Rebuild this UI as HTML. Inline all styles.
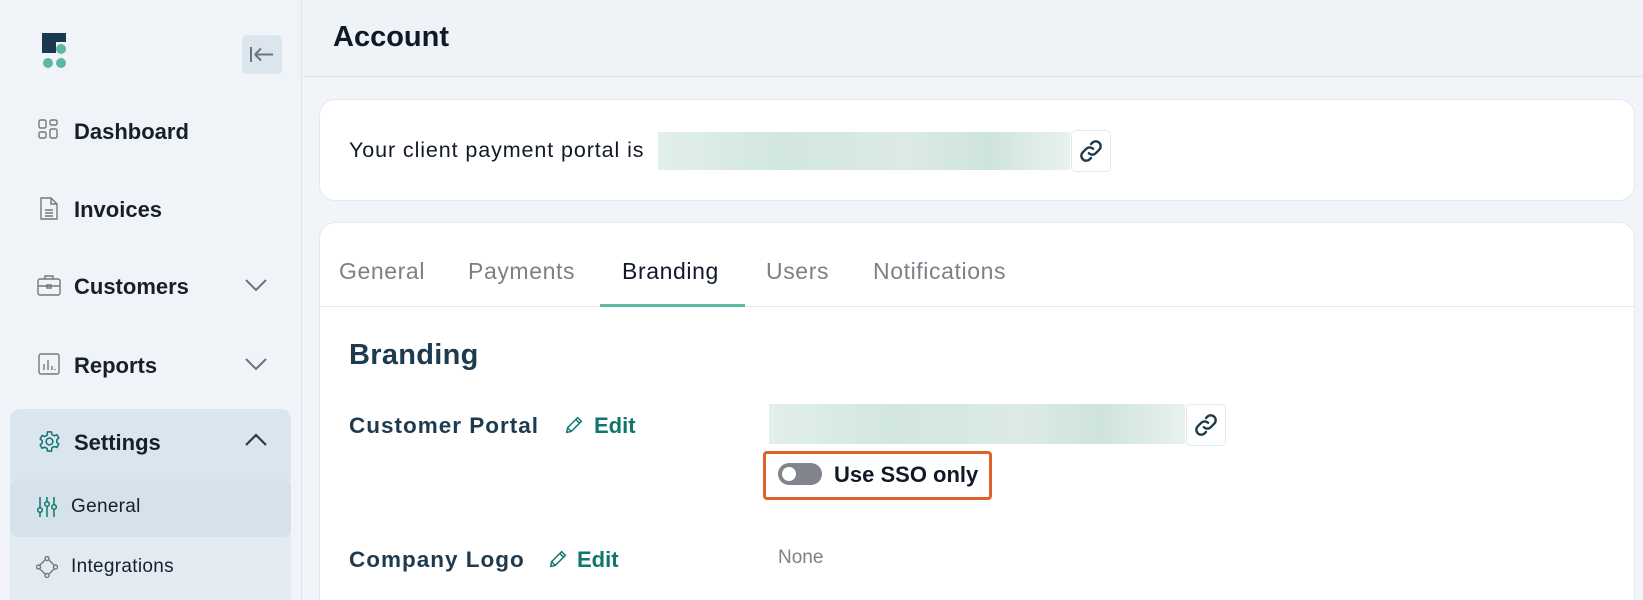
<!DOCTYPE html>
<html style="width:1643px;height:600px;overflow:hidden"><head><meta charset="utf-8"><style>
*{margin:0;padding:0;box-sizing:border-box}
body{width:1643px;height:600px;overflow:hidden;background:#f1f5f9;font-family:"Liberation Sans",sans-serif;position:relative;color:#111827}
.a{position:absolute}
.side{left:0;top:0;width:302px;height:600px;background:#f0f4f8;border-right:1px solid #dde3ea;overflow:hidden}
.nav{position:absolute;left:0;font-size:22px;font-weight:bold;color:#15202b;white-space:nowrap}
.ic{position:absolute;left:38px}
.txt{position:absolute;left:74px}
.blur{background:linear-gradient(90deg,#e2efec,#d2e6e1 30%,#dceae6 60%,#cfe3de 80%,#e9f2f0)}
.lbtn{background:#fff;border:1px solid #e3e8ee;border-radius:5px;display:flex;align-items:center;justify-content:center}
.tab{position:absolute;top:258px;font-size:23px;color:#7b8089;letter-spacing:0.6px}
</style></head><body>
<div class="a side">
  <svg class="a" style="left:42px;top:33px" width="26" height="38" viewBox="0 0 26 38"><path d="M0 0H24V9H14V20H0Z" fill="#1b3a52"/><circle cx="19" cy="16" r="5" fill="#5fb7a3"/><circle cx="6" cy="30" r="5" fill="#5fb7a3"/><circle cx="19" cy="30" r="5" fill="#5fb7a3"/></svg>
  <div class="a" style="left:242px;top:35px;width:40px;height:39px;background:#dbe5ed;border-radius:5px"><svg width="40" height="39"><path d="M9 12V27M13 19.5H31M13 19.5l6-6M13 19.5l6 6" stroke="#6b7280" stroke-width="2" fill="none"/></svg></div>
  <div class="nav" style="top:119px"><svg class="ic" width="22" height="22" viewBox="0 0 22 22" fill="none" stroke="#777" stroke-width="1.4"><rect x="1" y="1" width="7" height="8" rx="1.5"/><rect x="12" y="1" width="7" height="5" rx="1.5"/><rect x="1" y="13" width="7" height="6" rx="1.5"/><rect x="12" y="10" width="7" height="9" rx="1.5"/></svg><span class="txt">Dashboard</span></div>
  <div class="nav" style="top:197px"><svg class="ic" width="22" height="24" viewBox="0 0 22 24" fill="none" stroke="#777" stroke-width="1.4"><path d="M3 1H13L19 7V22H3Z M13 1V7H19 M7 13H15M7 16H15M7 19H15"/></svg><span class="txt">Invoices</span></div>
  <div class="nav" style="top:274px"><svg class="ic" style="left:37px" width="24" height="22" viewBox="0 0 24 22" fill="none" stroke="#777" stroke-width="1.4"><rect x="1" y="5" width="22" height="16" rx="2"/><path d="M8 5V2H16V5M1 12H23M10 11h4v3h-4z"/></svg><span class="txt">Customers</span><svg class="a" style="left:244px;top:4px" width="24" height="14"><path d="M2 2l10 10 10-10" stroke="#6b7280" stroke-width="2" fill="none"/></svg></div>
  <div class="nav" style="top:353px"><svg class="ic" width="22" height="22" viewBox="0 0 22 22" fill="none" stroke="#777" stroke-width="1.4"><rect x="1" y="1" width="20" height="20" rx="2"/><path d="M6 17V11M10 17V7M14 17V13M17 17V16"/></svg><span class="txt">Reports</span><svg class="a" style="left:244px;top:4px" width="24" height="14"><path d="M2 2l10 10 10-10" stroke="#6b7280" stroke-width="2" fill="none"/></svg></div>
  <div class="a" style="left:10px;top:409px;width:281px;height:191px;background:#e3ebf2;border-radius:10px 10px 0 0"></div>
  <div class="a" style="left:10px;top:409px;width:281px;height:70px;background:#dae5ed;border-radius:10px 10px 0 0"></div>
  <div class="a" style="left:10px;top:479px;width:281px;height:58px;background:#d5e2ea;border-radius:8px"></div>
  <div class="nav" style="top:430px"><svg class="ic" width="23" height="23" viewBox="0 0 24 24" fill="none" stroke="#0f766e" stroke-width="1.6"><circle cx="12" cy="12" r="3.5"/><path d="M10 2h4l.6 2.8 2.4 1.2 2.7-1 2 3.4-2.1 2v2.4l2.1 2-2 3.4-2.7-1-2.4 1.2L14 22h-4l-.6-2.8-2.4-1.2-2.7 1-2-3.4 2.1-2V11.2L2.3 9.2l2-3.4 2.7 1 2.4-1.2Z"/></svg><span class="txt">Settings</span><svg class="a" style="left:244px;top:3px" width="24" height="14"><path d="M2 12l10-10 10 10" stroke="#1e3a4f" stroke-width="2.2" fill="none"/></svg></div>
  <div class="a" style="left:37px;top:496px"><svg width="20" height="22" viewBox="0 0 20 22" fill="none" stroke="#0f766e" stroke-width="1.5"><path d="M3 1v20M10 1v20M17 1v20"/><circle cx="3" cy="14" r="2.3" fill="#d5e2ea"/><circle cx="10" cy="8" r="2.3" fill="#d5e2ea"/><circle cx="17" cy="11" r="2.3" fill="#d5e2ea"/></svg></div>
  <div class="a" style="left:71px;top:496px;font-size:19px;color:#15202b;letter-spacing:0.3px">General</div>
  <div class="a" style="left:36px;top:556px"><svg width="22" height="22" viewBox="0 0 22 22" fill="none" stroke="#777" stroke-width="1.4"><path d="M11 2L20 11 11 20 2 11Z" /><circle cx="11" cy="2.5" r="2" fill="#e3ebf2"/><circle cx="19.5" cy="11" r="2" fill="#e3ebf2"/><circle cx="11" cy="19.5" r="2" fill="#e3ebf2"/><circle cx="2.5" cy="11" r="2" fill="#e3ebf2"/></svg></div>
  <div class="a" style="left:71px;top:556px;font-size:19px;color:#15202b;letter-spacing:0.3px">Integrations</div>
</div>
<div class="a" style="left:303px;top:0;width:1340px;height:77px;background:#eef3f7;border-bottom:1px solid #dde3ea"></div>
<div class="a" style="left:333px;top:21px;font-size:29px;font-weight:bold;color:#111827">Account</div>
<div class="a" style="left:319px;top:99px;width:1316px;height:102px;background:#fff;border:1px solid #e4e9ef;border-radius:16px"></div>
<div class="a" style="left:349px;top:138px;font-size:21.5px;color:#111827;letter-spacing:0.9px">Your client payment portal is</div>
<div class="a blur" style="left:658px;top:132px;width:412px;height:38px"></div>
<div class="a lbtn" style="left:1071px;top:130px;width:40px;height:42px"><svg width="26" height="26" viewBox="0 0 24 24" fill="none" stroke="#1e3a4f" stroke-width="2.2" stroke-linecap="round"><path d="M10 14a4.5 4.5 0 0 0 6.4 0l3.2-3.2a4.5 4.5 0 0 0-6.4-6.4l-1.2 1.2M14 10a4.5 4.5 0 0 0-6.4 0l-3.2 3.2a4.5 4.5 0 0 0 6.4 6.4l1.2-1.2"/></svg></div>
<div class="a" style="left:319px;top:222px;width:1316px;height:378px;background:#fff;border:1px solid #e4e9ef;border-bottom:none;border-radius:16px 16px 0 0"></div>
<div class="a" style="left:320px;top:306px;width:1314px;height:1px;background:#e4e7eb"></div>
<div class="tab" style="left:339px">General</div>
<div class="tab" style="left:468px">Payments</div>
<div class="tab" style="left:622px;color:#111827">Branding</div>
<div class="tab" style="left:766px">Users</div>
<div class="tab" style="left:873px">Notifications</div>
<div class="a" style="left:600px;top:304px;width:145px;height:3px;background:#5fb7a3"></div>
<div class="a" style="left:349px;top:339px;font-size:29px;font-weight:bold;color:#1e3a4f;letter-spacing:0.3px">Branding</div>
<div class="a" style="left:349px;top:413px;font-size:22.5px;font-weight:bold;color:#1e3a4f;letter-spacing:1px">Customer Portal</div>
<svg class="a" style="left:563px;top:414px" width="22" height="22" viewBox="0 0 24 24" fill="none" stroke="#0f766e" stroke-width="1.6"><path d="M4 20l1-5L16 4l4 4L9 19Z M14 6l4 4 M5 15l4 4"/></svg>
<div class="a" style="left:594px;top:413px;font-size:22px;font-weight:bold;color:#0f766e">Edit</div>
<div class="a blur" style="left:769px;top:404px;width:416px;height:40px"></div>
<div class="a lbtn" style="left:1186px;top:404px;width:40px;height:42px"><svg width="26" height="26" viewBox="0 0 24 24" fill="none" stroke="#1e3a4f" stroke-width="2.2" stroke-linecap="round"><path d="M10 14a4.5 4.5 0 0 0 6.4 0l3.2-3.2a4.5 4.5 0 0 0-6.4-6.4l-1.2 1.2M14 10a4.5 4.5 0 0 0-6.4 0l-3.2 3.2a4.5 4.5 0 0 0 6.4 6.4l1.2-1.2"/></svg></div>
<div class="a" style="left:763px;top:451px;width:229px;height:49px;border:3px solid #e0602a;border-radius:4px"></div>
<div class="a" style="left:778px;top:463px;width:44px;height:22px;background:#80858c;border-radius:11px"><div class="a" style="left:4px;top:4px;width:14px;height:14px;background:#fff;border-radius:50%"></div></div>
<div class="a" style="left:834px;top:462px;font-size:22px;font-weight:bold;color:#111827">Use SSO only</div>
<div class="a" style="left:349px;top:547px;font-size:22.5px;font-weight:bold;color:#1e3a4f;letter-spacing:1px">Company Logo</div>
<svg class="a" style="left:547px;top:548px" width="22" height="22" viewBox="0 0 24 24" fill="none" stroke="#0f766e" stroke-width="1.6"><path d="M4 20l1-5L16 4l4 4L9 19Z M14 6l4 4 M5 15l4 4"/></svg>
<div class="a" style="left:577px;top:547px;font-size:22px;font-weight:bold;color:#0f766e">Edit</div>
<div class="a" style="left:778px;top:547px;font-size:19px;color:#7b8089">None</div>
</body></html>
